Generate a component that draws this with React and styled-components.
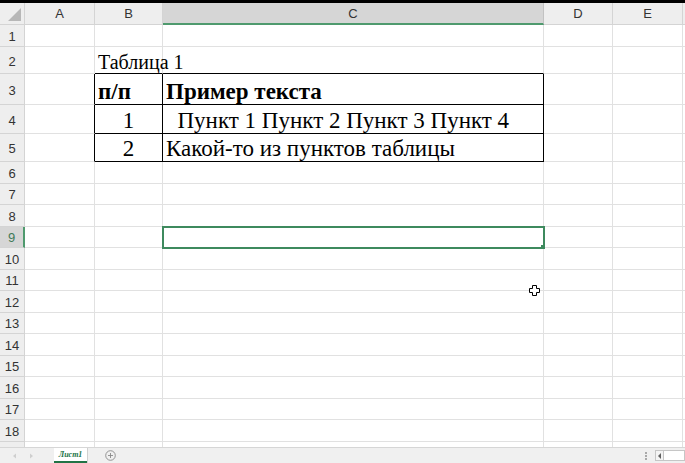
import React from "react";
import styled, { createGlobalStyle } from "styled-components";

const GlobalStyle = createGlobalStyle`
  html, body {
    margin: 0;
    padding: 0;
    background: #ffffff;
    overflow: hidden;
  }
`;

const columns = [
  { name: "A", width: 70 },
  { name: "B", width: 68 },
  { name: "C", width: 381 },
  { name: "D", width: 69 },
  { name: "E", width: 70 },
  { name: "", width: 40 },
];

const rowHeights = [22, 27, 31, 29, 28, 21.5, 21.5, 21.5, 21.5, 21.5, 21.5, 21.5, 21.5, 21.5, 21.5, 21.5, 21.5, 21.5, 21.5];

// content of the sheet: row index -> column name -> cell
const cells = {
  2: {
    B: { text: "Таблица 1", overflow: true, bottomBlack: true },
    C: { bottomBlack: true },
  },
  3: {
    B: { text: "п/п", bold: true, table: true },
    C: { text: "Пример текста", bold: true, table: true },
  },
  4: {
    B: { text: "1", align: "center", table: true },
    C: { text: "  Пункт 1 Пункт 2 Пункт 3 Пункт 4", table: true },
  },
  5: {
    B: { text: "2", align: "center", table: true },
    C: { text: "Какой-то из пунктов таблицы", table: true },
  },
};

const selectedRow = 9;
const selectedCol = "C";

const Page = styled.div`
  width: 685px;
  height: 463px;
  display: flex;
  flex-direction: column;
  background: #ffffff;
  overflow: hidden;
  position: relative;
`;

const TopBar = styled.div`
  height: 3px;
  background: #000000;
  flex: none;
`;

const Sheet = styled.div`
  flex: 1;
  overflow: hidden;
  display: grid;
  grid-template-columns: 25px ${columns.map((c) => c.width + "px").join(" ")};
  grid-template-rows: 22px ${rowHeights.map((h) => h + "px").join(" ")};
  align-content: start;
`;

const Corner = styled.div`
  position: relative;
  background: #eeeeee;
  border-right: 1px solid #d4d4d4;
  border-bottom: 1px solid #d4d4d4;
  box-sizing: border-box;

  &::after {
    content: "";
    position: absolute;
    right: 3px;
    bottom: 3px;
    width: 0;
    height: 0;
    border-left: 13px solid transparent;
    border-bottom: 13px solid #b7b7b7;
  }
`;

const ColHeader = styled.div`
  box-sizing: border-box;
  display: flex;
  align-items: center;
  justify-content: center;
  background: ${(p) => (p.active ? "#d6d6d6" : "#eeeeee")};
  border-right: 1px solid ${(p) => (p.active ? "#c2c2c2" : "#d4d4d4")};
  border-bottom: ${(p) => (p.active ? "2px solid #4f9a6e" : "1px solid #d4d4d4")};
  font-family: "Liberation Sans", Arial, sans-serif;
  font-size: 13px;
  color: #333333;
`;

const RowHeader = styled.div`
  box-sizing: border-box;
  display: flex;
  align-items: center;
  justify-content: center;
  padding-top: 2px;
  background: ${(p) => (p.active ? "#d6d6d6" : "#eeeeee")};
  border-right: ${(p) => (p.active ? "2px solid #4f9a6e" : "1px solid #d4d4d4")};
  border-bottom: 1px solid #d4d4d4;
  font-family: "Liberation Sans", Arial, sans-serif;
  font-size: 13px;
  color: ${(p) => (p.active ? "#3f7a58" : "#333333")};
`;

const Cell = styled.div`
  box-sizing: border-box;
  position: relative;
  display: flex;
  align-items: flex-end;
  justify-content: ${(p) => (p.align === "center" ? "center" : "flex-start")};
  padding: 0 3px 0 3px;
  border-right: 1px solid ${(p) => (p.rightBlack ? "#000000" : "#e1e1e1")};
  border-bottom: 1px solid ${(p) => (p.bottomBlack ? "#000000" : "#e1e1e1")};
  font-family: "Liberation Serif", "Times New Roman", serif;
  font-size: 23px;
  line-height: 25px;
  font-weight: ${(p) => (p.bold ? 700 : 400)};
  color: #000000;
  white-space: pre;
  overflow: ${(p) => (p.overflow ? "visible" : "hidden")};
  z-index: ${(p) => (p.overflow ? 2 : p.selected ? 3 : 1)};
  outline: ${(p) => (p.selected ? "2px solid #3e8a5e" : "none")};
  outline-offset: -1px;

  &::after {
    content: "";
    display: ${(p) => (p.selected ? "block" : "none")};
    position: absolute;
    right: -3px;
    bottom: -3px;
    width: 4px;
    height: 4px;
    background: #3e8a5e;
    border: 1px solid #ffffff;
  }
`;

const Caption = styled.span`
  font-size: 20px;
  line-height: 22px;
`;

const Cursor = styled.svg`
  position: absolute;
  left: 529px;
  top: 285px;
  z-index: 10;
`;

const TabBar = styled.div`
  height: 16px;
  flex: none;
  display: flex;
  align-items: stretch;
  background: #f0f0f0;
  border-top: 1px solid #d6d6d6;
  box-sizing: border-box;
  font-family: "Liberation Sans", Arial, sans-serif;
`;

const NavArrows = styled.div`
  width: 54px;
  display: flex;
  align-items: center;
  gap: 12px;
  padding-left: 12px;
  box-sizing: border-box;
`;

const Tab = styled.div`
  width: 33px;
  background: #ffffff;
  display: flex;
  align-items: center;
  justify-content: center;
  border-bottom: 2px solid #217346;
  box-shadow: 1px 0 0 #d0d0d0;
  font-family: "Liberation Serif", serif;
  font-style: italic;
  font-weight: 700;
  font-size: 8px;
  color: #217346;
`;

const AddSheet = styled.div`
  margin-left: 18px;
  display: flex;
  align-items: center;
`;

const RightTools = styled.div`
  margin-left: auto;
  display: flex;
  align-items: center;
  gap: 6px;
`;

const Grip = styled.div`
  width: 2px;
  height: 8px;
  border-left: 2px dotted #a9a9a9;
`;

const ScrollTrack = styled.div`
  display: flex;
  align-items: center;
  height: 11px;
  width: 30px;
  border: 1px solid #c6c6c6;
  background: #ffffff;
  box-sizing: border-box;
`;

const ScrollArrow = styled.div`
  width: 7px;
  height: 100%;
  display: flex;
  align-items: center;
  justify-content: center;
  border-right: 1px solid #c6c6c6;
  background: #f4f4f4;
  &::before {
    content: "";
    border-top: 3px solid transparent;
    border-bottom: 3px solid transparent;
    border-right: 3px solid #606060;
  }
`;

const Arrow = ({ dir }) => (
  <svg width="5" height="6" viewBox="0 0 5 6">
    <path d={dir === "left" ? "M4 0.5L1 3l3 2.5z" : "M1 0.5L4 3l-3 2.5z"} fill="#cfcfcf" />
  </svg>
);

export default function App() {
  return (
    <>
      <GlobalStyle />
      <Page>
        <TopBar />
        <Sheet>
          <Corner />
          {columns.map((c, i) => (
            <ColHeader key={"h" + i} active={c.name === selectedCol}>
              {c.name}
            </ColHeader>
          ))}
          {rowHeights.map((_, ri) => {
            const row = ri + 1;
            const rowCells = cells[row] || {};
            const nextRow = cells[row + 1] || {};
            return (
              <React.Fragment key={"r" + row}>
                <RowHeader active={row === selectedRow}>{row}</RowHeader>
                {columns.map((c, ci) => {
                  const cell = rowCells[c.name] || {};
                  const right = rowCells[columns[ci + 1]?.name] || {};
                  const below = nextRow[c.name] || {};
                  return (
                    <Cell
                      key={row + c.name + ci}
                      align={cell.align}
                      bold={cell.bold}
                      overflow={cell.overflow}
                      rightBlack={cell.table || right.table}
                      bottomBlack={cell.bottomBlack || cell.table || below.table}
                      selected={row === selectedRow && c.name === selectedCol}
                    >
                      {cell.overflow ? <Caption>{cell.text}</Caption> : cell.text}
                    </Cell>
                  );
                })}
              </React.Fragment>
            );
          })}
        </Sheet>
        <TabBar>
          <NavArrows>
            <Arrow dir="left" />
            <Arrow dir="right" />
          </NavArrows>
          <Tab>Лист1</Tab>
          <AddSheet>
            <svg width="11" height="11" viewBox="0 0 11 11">
              <circle cx="5.5" cy="5.5" r="4.8" fill="none" stroke="#8a8a8a" strokeWidth="0.9" />
              <path d="M5.5 3v5M3 5.5h5" stroke="#8a8a8a" strokeWidth="0.9" />
            </svg>
          </AddSheet>
          <RightTools>
            <Grip />
            <ScrollTrack>
              <ScrollArrow />
            </ScrollTrack>
          </RightTools>
        </TabBar>
        <Cursor width="11" height="11" viewBox="0 0 11 11">
          <path
            d="M3.5 0.5h4v3h3v4h-3v3h-4v-3h-3v-4h3z"
            fill="#ffffff"
            stroke="#000000"
            strokeWidth="1"
          />
        </Cursor>
      </Page>
    </>
  );
}
